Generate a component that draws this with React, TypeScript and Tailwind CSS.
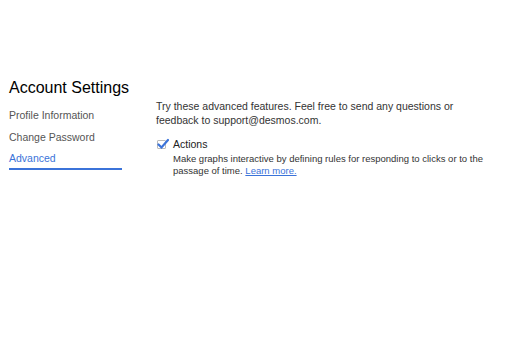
export default function App() {
  return (
    <div className="w-[512px] h-[342px] bg-white text-[#222] font-['Liberation_Sans',Arial,sans-serif]">
      <div className="flex pt-[78px] pl-[9px]">
        {/* Left column: title + nav */}
        <div className="w-[147px] shrink-0">
          <h1 className="text-[16px] leading-[20px] text-black whitespace-nowrap">Account Settings</h1>
          <div className="w-[113px] mt-[7px] flex flex-col text-[10.5px]">
            <div className="h-[22px] flex items-center text-[#555]">Profile Information</div>
            <div className="h-[22px] flex items-center text-[#555]">Change Password</div>
            <div className="h-[21px] flex items-center text-[#3a73d9] border-b-2 border-[#3b73d9] pt-[1px]">
              Advanced
            </div>
          </div>
        </div>

        {/* Content */}
        <div className="w-[340px] pt-[21px]">
          <p className="text-[10.5px] leading-[14px] text-[#333]">
            Try these advanced features. Feel free to send any questions or feedback to support@desmos.com.
          </p>
          <div className="flex mt-[10px]">
            <div className="w-[17px] shrink-0 pt-[3px] pl-[1px]">
              <div className="w-[9px] h-[9px] border border-[#bbb] rounded-[1px] relative">
                <svg viewBox="0 0 12 12" className="absolute -left-[1px] -top-[3px] w-[12px] h-[12px]">
                  <path d="M1.5 6.5 L4.5 9.5 L11 2" fill="none" stroke="#3b73d9" strokeWidth="2.2" strokeLinecap="round" />
                </svg>
              </div>
            </div>
            <div>
              <div className="text-[10.5px] leading-[14px] text-[#222]">Actions</div>
              <p className="text-[9.5px] leading-[12px] text-[#333] mt-[2px]">
                Make graphs interactive by defining rules for responding to clicks or to the passage of time.{" "}
                <a className="text-[#3b73d9] underline">Learn more.</a>
              </p>
            </div>
          </div>
        </div>
      </div>
    </div>
  );
}
